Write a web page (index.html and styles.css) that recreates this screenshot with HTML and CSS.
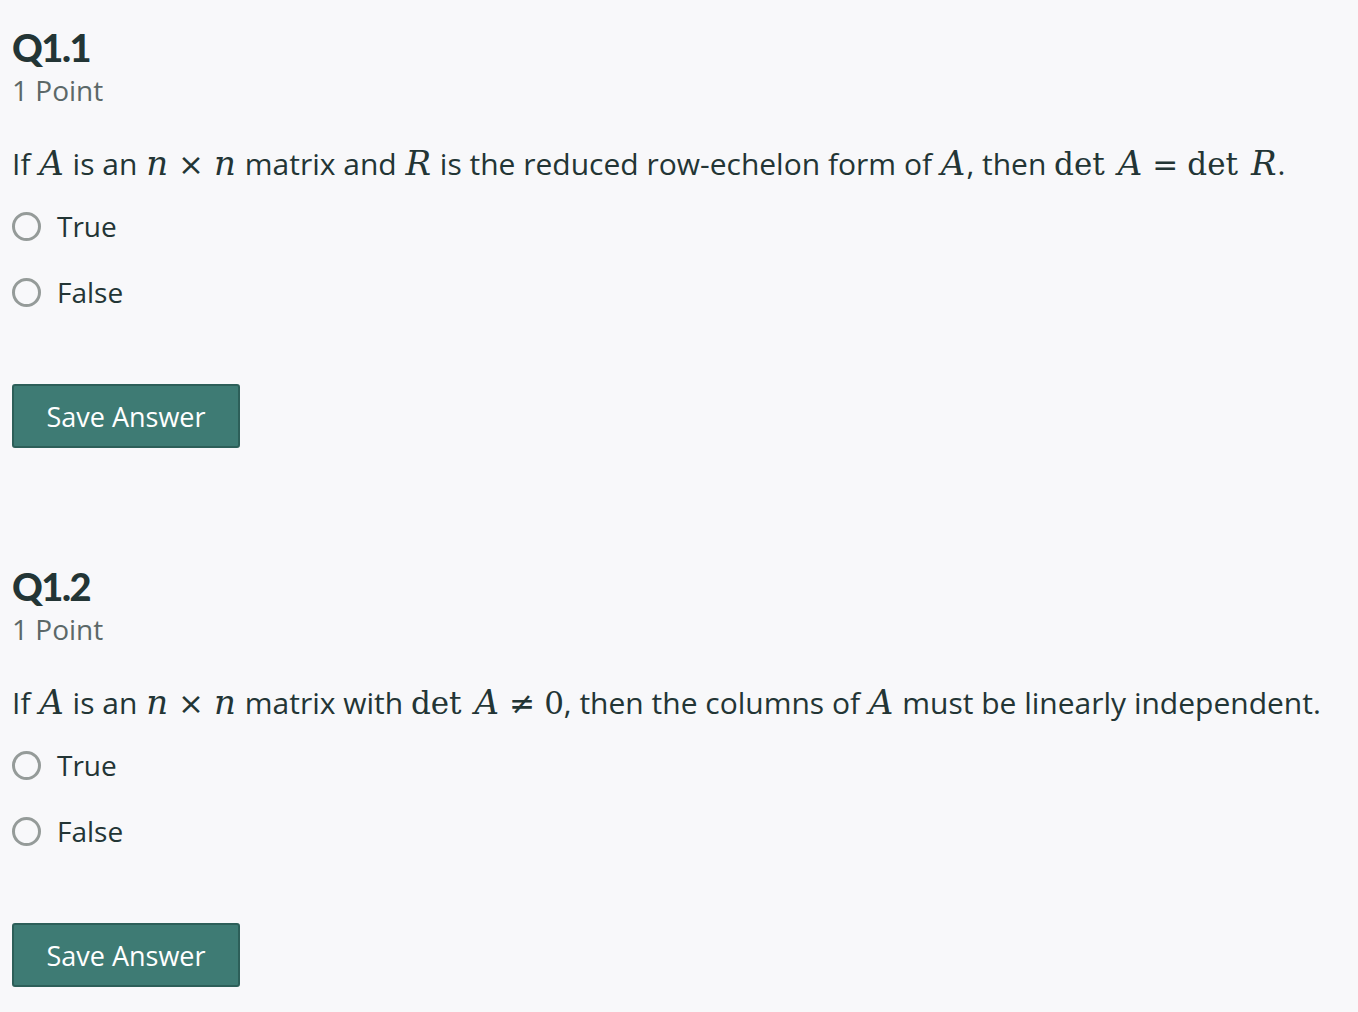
FILE: index.html
```html
<!DOCTYPE html>
<html lang="en">
<head>
    <meta charset="UTF-8">
    <title>Questions</title>
    <link rel="stylesheet" href="styles.css">
</head>
<body>
    <div class="question">
        <h2 class="q-title">Q1.1</h2>
        <div class="q-points">1 Point</div>
        <p class="q-text">If <span class="mi">A</span> is an <span class="mi">n</span><span class="mo">×</span><span class="mi">n</span> matrix and <span class="mi">R</span> is the reduced row-echelon form of <span class="mi">A</span>, then <span class="mr op">det</span><span class="mi">A</span><span class="mo">=</span><span class="mr op">det</span><span class="mi">R</span>.</p>
        <label class="option"><span class="radio"></span>True</label>
        <label class="option"><span class="radio"></span>False</label>
        <button class="save">Save Answer</button>
    </div>

    <div class="question">
        <h2 class="q-title">Q1.2</h2>
        <div class="q-points">1 Point</div>
        <p class="q-text">If <span class="mi">A</span> is an <span class="mi">n</span><span class="mo">×</span><span class="mi">n</span> matrix with <span class="mr op">det</span><span class="mi">A</span><span class="mo">≠</span><span class="mr">0</span>, then the columns of <span class="mi">A</span> must be linearly independent.</p>
        <label class="option"><span class="radio"></span>True</label>
        <label class="option"><span class="radio"></span>False</label>
        <button class="save">Save Answer</button>
    </div>
</body>
</html>
```

FILE: styles.css
```css
body {
    margin: 0;
    padding: 24px 12px 0;
    background-color: #f8f8fa;
    color: #233535;
    font-family: "Open Sans", "Lato", sans-serif;
}
.question {
    margin-bottom: 115px;
}
.question:last-child {
    margin-bottom: 0;
}
.q-title {
    margin: 0;
    font-family: "Lato", sans-serif;
    font-size: 38px;
    font-weight: 900;
    line-height: 46px;
    letter-spacing: -1.5px;
}
.q-points {
    font-size: 28px;
    line-height: 40px;
    color: #5c6868;
}
.q-text {
    margin: 34px 0 9px;
    font-size: 30px;
    line-height: 40px;
}
.mi, .mr, .mo {
    line-height: 1;
}
.mi {
    font-family: "DejaVu Serif", serif;
    font-style: italic;
    font-size: 34px;
    margin: 0 1px;
}
.mr {
    font-family: "DejaVu Serif", serif;
    font-size: 31px;
}
.op {
    margin-right: 12px;
}
.mo {
    font-family: "DejaVu Sans", sans-serif;
    font-size: 31px;
    margin: 0 9px;
}
.option {
    display: flex;
    align-items: center;
    height: 66px;
    font-size: 28px;
}
.radio {
    width: 23px;
    height: 23px;
    border: 3.5px solid #959b99;
    border-radius: 50%;
    margin-right: 16px;
}
.save {
    display: block;
    margin-top: 59px;
    width: 228px;
    height: 64px;
    background-color: #3e7b74;
    border: 2px solid #2d5f59;
    border-radius: 3px;
    color: #ffffff;
    font-family: "Open Sans", sans-serif;
    font-size: 27px;
    font-weight: 500;
}
```
